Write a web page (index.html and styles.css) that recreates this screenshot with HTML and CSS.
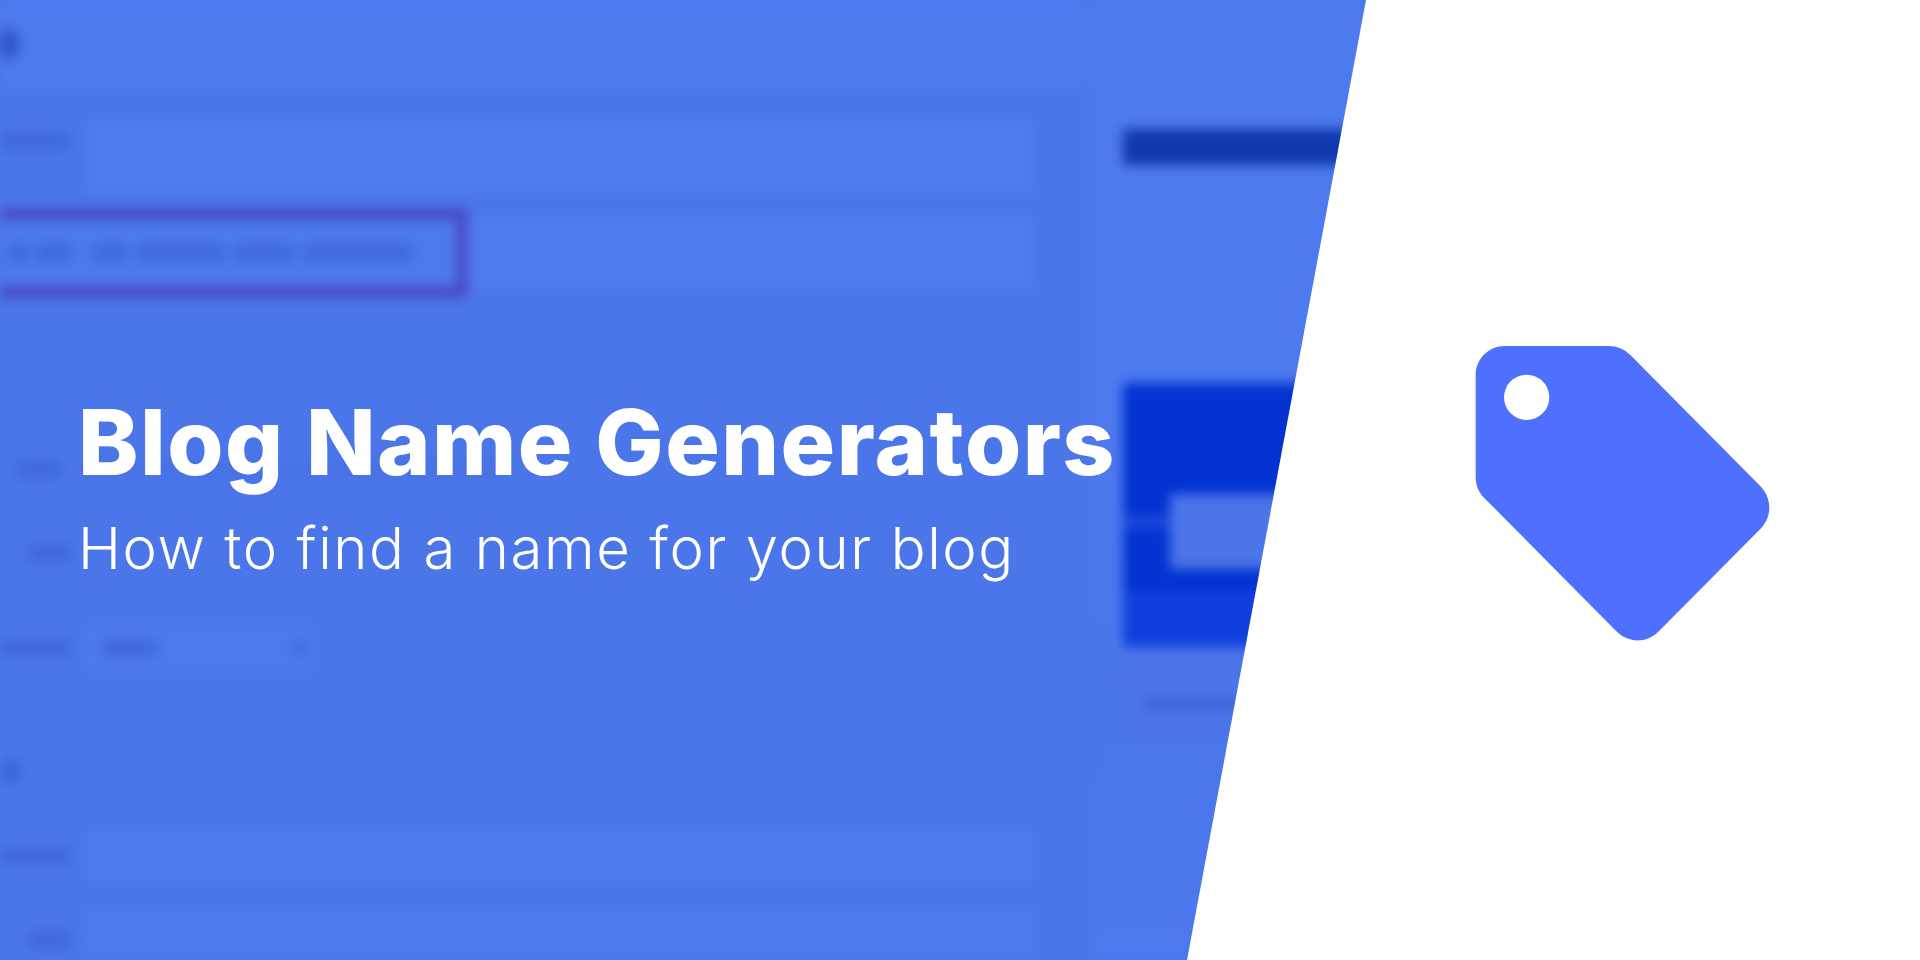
FILE: index.html
```html
<!DOCTYPE html>
<html lang="en">
<head>
<meta charset="utf-8">
<title>Blog Name Generators</title>
<link rel="stylesheet" href="styles.css">
</head>
<body>
<main class="hero">
  <div class="backdrop" aria-hidden="true">
    <div class="form">
      <div class="row row-head"><span class="smudge dot"></span></div>
      <div class="row row-title"><span class="label"><span class="smudge w70"></span></span><span class="field"></span></div>
      <div class="row row-url">
        <span class="outline">
          <span class="smudge w20"></span><span class="smudge w35"></span><span class="smudge w35 gap"></span><span class="smudge w90"></span><span class="smudge w60"></span><span class="smudge w110"></span>
        </span>
        <span class="field"></span>
      </div>
      <div class="row row-parent"><span class="label"><span class="smudge w45 inset"></span></span><span class="smudge wide"></span></div>
      <div class="row row-order"><span class="label"><span class="smudge w42 inset2"></span></span></div>
      <div class="row row-select">
        <span class="label"><span class="smudge w70"></span></span>
        <span class="select"><span class="smudge w55"></span><span class="smudge tick"></span></span>
      </div>
      <div class="row row-sub"><span class="smudge dot small"></span></div>
      <div class="row row-meta"><span class="label"><span class="smudge w70"></span></span><span class="field"></span></div>
      <div class="row row-last"><span class="label"><span class="smudge w42 inset2"></span></span><span class="field"></span></div>
    </div>
    <div class="side">
      <div class="side-head"></div>
      <div class="panel">
        <div class="panel-top"></div>
        <div class="panel-mid">
          <div class="tabs"><span class="tab"></span></div>
          <div class="button"></div>
        </div>
        <div class="panel-end"></div>
        <div class="panel-foot"></div>
      </div>
      <div class="note"><span class="smudge note-line"></span></div>
    </div>
  </div>

  <div class="copy">
    <h1 class="title">Blog Name Generators</h1>
    <p class="subtitle">How to find a name for your blog</p>
  </div>

  <div class="sheet">
    <svg class="tag" viewBox="0 0 1080 1020" role="img" aria-label="Price tag icon">
      <path class="tag-body" fill-rule="evenodd" d="M107 165C107 117 146 78 194 78H505C530 78 553 87 571 105L960 497C997 534 997 591 961 627L655 935C620 970 565 970 529 934L132 533C115 516 107 495 107 472ZM260 164A68 68 0 1 0 260 300A68 68 0 1 0 260 164Z"/>
    </svg>
  </div>
</main>
</body>
</html>
```

FILE: styles.css
```css
* { box-sizing: border-box; }

html, body {
  margin: 0;
  height: 100%;
}

body {
  background: #fff;
  overflow: hidden;
}

.hero {
  position: relative;
  width: 1920px;
  height: 960px;
  overflow: hidden;
  background: #4a76ea;
  display: flex;
  flex-direction: column;
  padding: 392px 0 0 78px;
}

/* Blurred editor screenshot behind the copy */
.backdrop {
  position: absolute;
  inset: 0;
  display: flex;
  filter: blur(6px);
  background: #4a76ea;
}

.form {
  width: 1090px;
  flex: none;
  display: flex;
  flex-direction: column;
}

.row {
  display: flex;
  align-items: center;
}

.label {
  width: 85px;
  flex: none;
  display: flex;
}

.field {
  flex: none;
  width: 950px;
  align-self: stretch;
  background: #4e7bf0;
}

.smudge {
  display: block;
  height: 16px;
  flex: none;
  background: #3f68dc;
  border-radius: 4px;
}

.w20 { width: 20px; }
.w35 { width: 35px; }
.w42 { width: 42px; }
.w45 { width: 45px; }
.w55 { width: 55px; }
.w60 { width: 60px; }
.w70 { width: 70px; }
.w90 { width: 90px; }
.w110 { width: 110px; }

.inset { margin-left: 16px; }
.inset2 { margin-left: 28px; }

.dot {
  width: 22px;
  height: 32px;
  margin-left: -2px;
  border-radius: 50%;
  background: #3059cc;
}

.dot.small {
  width: 18px;
  height: 24px;
  margin-left: 2px;
  background: #3a63d8;
}

.row-head { height: 87px; width: 1085px; background: #4e7af0; }
.row-title { height: 73px; margin-top: 35px; align-items: flex-start; }
.row-title .label { padding-top: 11px; }
.row-url { height: 90px; margin-top: 13px; }
.row-url .field { margin-left: -383px; height: 74px; align-self: center; }

.outline {
  flex: none;
  position: relative;
  z-index: 1;
  width: 468px;
  height: 90px;
  border: 12px solid #4a4ac4;
  border-left: 0;
  border-radius: 0 4px 4px 0;
  background: #4d79ee;
  display: flex;
  align-items: center;
  gap: 8px;
  padding-left: 8px;
}

.outline .gap { margin-left: 14px; }

.row-parent { height: 30px; margin-top: 156px; }
.wide { width: 420px; height: 10px; background: #4670e4; }
.row-order { height: 30px; margin-top: 54px; }

.row-select { height: 47px; margin-top: 56px; }
.select {
  flex: none;
  width: 230px;
  align-self: stretch;
  background: #4d79ee;
  display: flex;
  align-items: center;
  justify-content: space-between;
  padding: 0 8px 0 17px;
}
.tick { width: 14px; height: 14px; border-radius: 50%; }

.row-sub { height: 40px; margin-top: 80px; }
.row-meta { height: 48px; margin-top: 41px; }
.row-meta .field, .row-last .field { background: #4e7af0; }
.row-last { height: 50px; margin-top: 27px; align-items: flex-end; }
.row-last .label { padding-bottom: 9px; }

.side {
  flex: 1;
  padding: 129px 0 0 33px;
  display: flex;
  flex-direction: column;
  background: linear-gradient(#4e7aef 0, #4e7aef 40%, #4b76ea 70%, #4d78ee 100%);
}

.side-head {
  height: 36px;
  background: #1038ae;
}

.panel {
  margin-top: 218px;
  height: 264px;
  background: #0232d0;
  display: flex;
  flex-direction: column;
}

.panel-top { height: 111px; }

.panel-mid {
  height: 75px;
  display: flex;
}

.tabs {
  width: 47px;
  padding-top: 21px;
}

.tab {
  display: block;
  height: 14px;
  background: #1a46dc;
}

.button {
  flex: 1;
  background: #4b75e8;
}

.panel-end { height: 22px; }
.panel-foot { flex: 1; background: #0f3fdc; }

.note {
  margin-top: 13px;
  height: 80px;
  background: #4b75e9;
  display: flex;
  align-items: center;
  padding: 8px 0 0 20px;
}

.note-line { width: 100px; height: 14px; background: #3f67da; }

/* Copy */
.copy {
  position: relative;
  z-index: 1;
}

.title {
  margin: 0;
  font-family: Inter, "Liberation Sans", sans-serif;
  font-weight: 800;
  font-size: 91px;
  line-height: 100px;
  letter-spacing: 1.45px;
  color: #fff;
  white-space: nowrap;
}

.subtitle {
  margin: 21px 0 0;
  font-family: Inter, "Liberation Sans", sans-serif;
  font-weight: 300;
  font-size: 58px;
  line-height: 70px;
  letter-spacing: 1.6px;
  color: #fff;
  white-space: nowrap;
}

/* White diagonal sheet */
.sheet {
  position: absolute;
  inset: 0;
  z-index: 2;
  background: #fff;
  clip-path: polygon(1366px 0, 1920px 0, 1920px 960px, 1187px 960px);
  display: flex;
  justify-content: flex-end;
  padding: 320px 120px 0 0;
}

.tag {
  width: 360px;
  height: 340px;
  flex: none;
}

.tag-body { fill: #4f6fff; }
```
